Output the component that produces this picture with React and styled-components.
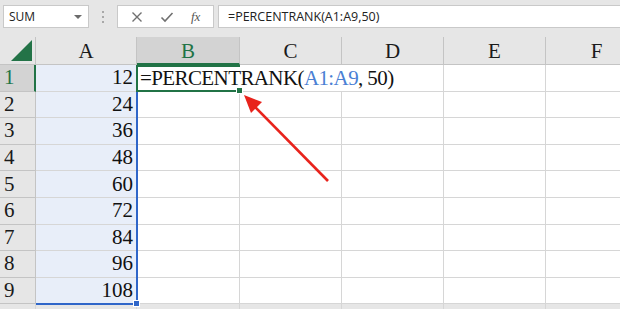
import React from 'react';
import styled, { createGlobalStyle } from 'styled-components';

const GlobalStyle = createGlobalStyle`
	html, body {
		margin: 0;
		padding: 0;
		background: #ffffff;
	}
	body {
		width: 620px;
		height: 309px;
		overflow: hidden;
	}
`;

const Page = styled.div`
	width: 620px;
	height: 309px;
	overflow: hidden;
	background: #e6e6e6;
	position: relative;
`;

const Toolbar = styled.div`
	height: 37px;
	display: flex;
	align-items: flex-start;
	padding: 5px 0 0 3px;
	box-sizing: border-box;
	background: #e6e6e6;
	font-family: "Open Sans", "Liberation Sans", sans-serif;
`;

const Box = styled.div`
	height: 23px;
	box-sizing: border-box;
	background: #ffffff;
	border: 1px solid #c9c9c9;
	display: flex;
	align-items: center;
`;

const NameBox = styled(Box)`
	width: 86px;
	padding: 0 0 0 5px;
	justify-content: space-between;
	font-size: 12px;
	color: #222;
`;

const Caret = styled.span`
	width: 0;
	height: 0;
	border-left: 4px solid transparent;
	border-right: 4px solid transparent;
	border-top: 4px solid #6b6b6b;
	margin-right: 6px;
`;

const Grip = styled.div`
	width: 28px;
	height: 23px;
	display: flex;
	flex-direction: column;
	align-items: center;
	justify-content: center;
	gap: 3px;
	& > span {
		width: 2px;
		height: 2px;
		background: #a8a8a8;
	}
`;

const IconBox = styled(Box)`
	width: 97px;
	justify-content: space-around;
	padding: 0 4px;
	color: #707070;
`;

const FxText = styled.span`
	font-family: "Liberation Serif", serif;
	font-style: italic;
	font-size: 13px;
	color: #555;
`;

const FormulaBox = styled(Box)`
	flex: 1;
	margin-left: 4px;
	border-right: none;
	padding-left: 9px;
	font-size: 12.5px;
	color: #222;
`;

const Sheet = styled.div`
	display: grid;
	grid-template-columns: 36px 101px 103px 102px 102px 102px 102px;
	grid-template-rows: 28px repeat(9, 26.6px) 20px;
	background: #ffffff;
	font-family: "Liberation Serif", "Noto Serif", serif;
	position: relative;
`;

const Corner = styled.div`
	background: #e6e6e6;
	border-right: 1px solid #c4c4c4;
	border-bottom: 1px solid #c4c4c4;
	position: relative;
	&::after {
		content: '';
		position: absolute;
		right: 3px;
		bottom: 3px;
		width: 0;
		height: 0;
		border-left: 21px solid transparent;
		border-bottom: 21px solid #237347;
	}
`;

const ColHead = styled.div`
	background: ${p => (p.active ? '#d3d3d3' : '#e6e6e6')};
	border-right: 1px solid #c4c4c4;
	border-bottom: ${p => (p.active ? '2px solid #217346' : '1px solid #c4c4c4')};
	color: ${p => (p.active ? '#217346' : '#1a1a1a')};
	font-size: 21px;
	display: flex;
	align-items: center;
	justify-content: center;
	padding-top: 2px;
	box-sizing: border-box;
`;

const RowHead = styled.div`
	background: ${p => (p.active ? '#d3d3d3' : '#e6e6e6')};
	border-right: ${p => (p.active ? '2px solid #217346' : '1px solid #c4c4c4')};
	border-bottom: 1px solid #c4c4c4;
	color: ${p => (p.active ? '#217346' : '#1a1a1a')};
	font-size: 21px;
	display: flex;
	align-items: center;
	padding-left: 4px;
	box-sizing: border-box;
`;

const Cell = styled.div`
	background: ${p => (p.selected ? '#e8eef9' : '#ffffff')};
	border-right: ${p => (p.hideRight ? 'none' : '1px solid #d6d6d6')};
	border-bottom: 1px solid #d6d6d6;
	font-size: 21px;
	color: #111;
	display: flex;
	align-items: center;
	justify-content: flex-end;
	padding-right: 3px;
	box-sizing: border-box;
	white-space: nowrap;
`;

const EditCell = styled.div`
	background: #ffffff;
	border: 2px solid #217346;
	border-right: none;
	margin-left: -1px;
	font-size: 21px;
	color: #111;
	display: flex;
	align-items: center;
	padding-left: 2px;
	box-sizing: border-box;
	white-space: nowrap;
	overflow: visible;
	position: relative;
	z-index: 1;
	letter-spacing: -0.6px;
	&::after {
		content: '';
		position: absolute;
		right: -3px;
		bottom: -4px;
		width: 5px;
		height: 5px;
		background: #217346;
		border: 1px solid #fff;
	}
`;

const Ref = styled.span`
	color: #4a80d4;
`;

const TextCursor = styled.span`
	display: inline-block;
	width: 1px;
	height: 25px;
	background: #111;
	margin-left: 4px;
`;

const Footer = styled.div`
	background: #e6e6e6;
	border-right: 1px solid #d6d6d6;
`;

const Selection = styled.div`
	position: absolute;
	left: 36px;
	top: 28px;
	width: 102px;
	height: 240px;
	border-right: 2px solid #2f66c9;
	border-bottom: 2px solid #2f66c9;
	box-sizing: border-box;
	pointer-events: none;
	&::after {
		content: '';
		position: absolute;
		right: -4px;
		bottom: -4px;
		width: 5px;
		height: 5px;
		background: #2f66c9;
		border: 1px solid #fff;
	}
`;

const Arrow = styled.svg`
	position: absolute;
	left: 0;
	top: 0;
	pointer-events: none;
	z-index: 3;
`;

const values = [12, 24, 36, 48, 60, 72, 84, 96, 108];
const cols = ['A', 'B', 'C', 'D', 'E', 'F'];

const App = () => {
	return (
		<Page>
			<GlobalStyle />
			<Toolbar>
				<NameBox>
					SUM
					<Caret />
				</NameBox>
				<Grip>
					<span />
					<span />
					<span />
				</Grip>
				<IconBox>
					<svg width="12" height="12" viewBox="0 0 12 12">
						<path d="M1.5 1.5 L10.5 10.5 M10.5 1.5 L1.5 10.5" stroke="#707070" strokeWidth="1.4" fill="none" />
					</svg>
					<svg width="14" height="12" viewBox="0 0 14 12">
						<path d="M1.5 6.5 L5 10 L12.5 2" stroke="#707070" strokeWidth="1.6" fill="none" />
					</svg>
					<FxText>fx</FxText>
				</IconBox>
				<FormulaBox>=PERCENTRANK(A1:A9,50)</FormulaBox>
			</Toolbar>
			<Sheet>
				<Corner />
				{cols.map(c => (
					<ColHead key={c} active={c === 'B'}>
						{c}
					</ColHead>
				))}
				{values.map((v, i) => (
					<React.Fragment key={v}>
						<RowHead active={i === 0}>{i + 1}</RowHead>
						<Cell selected>{v}</Cell>
						{i === 0 ? (
							<>
								<EditCell>
									=PERCENTRANK(<Ref>A1:A9</Ref>, 50)
									<TextCursor />
								</EditCell>
								<Cell hideRight />
								<Cell />
								<Cell />
								<Cell />
							</>
						) : (
							<>
								<Cell />
								<Cell />
								<Cell />
								<Cell />
								<Cell />
							</>
						)}
					</React.Fragment>
				))}
				<Footer />
				<Footer />
				<Footer />
				<Footer />
				<Footer />
				<Footer />
				<Footer />
				<Selection />
			</Sheet>
			<Arrow width="620" height="309" viewBox="0 0 620 309">
				<line x1="328" y1="181" x2="254" y2="106" stroke="#e8231c" strokeWidth="2.6" />
				<polygon points="244,95 251,113 262,102" fill="#e8231c" />
			</Arrow>
		</Page>
	);
};

export default App;
